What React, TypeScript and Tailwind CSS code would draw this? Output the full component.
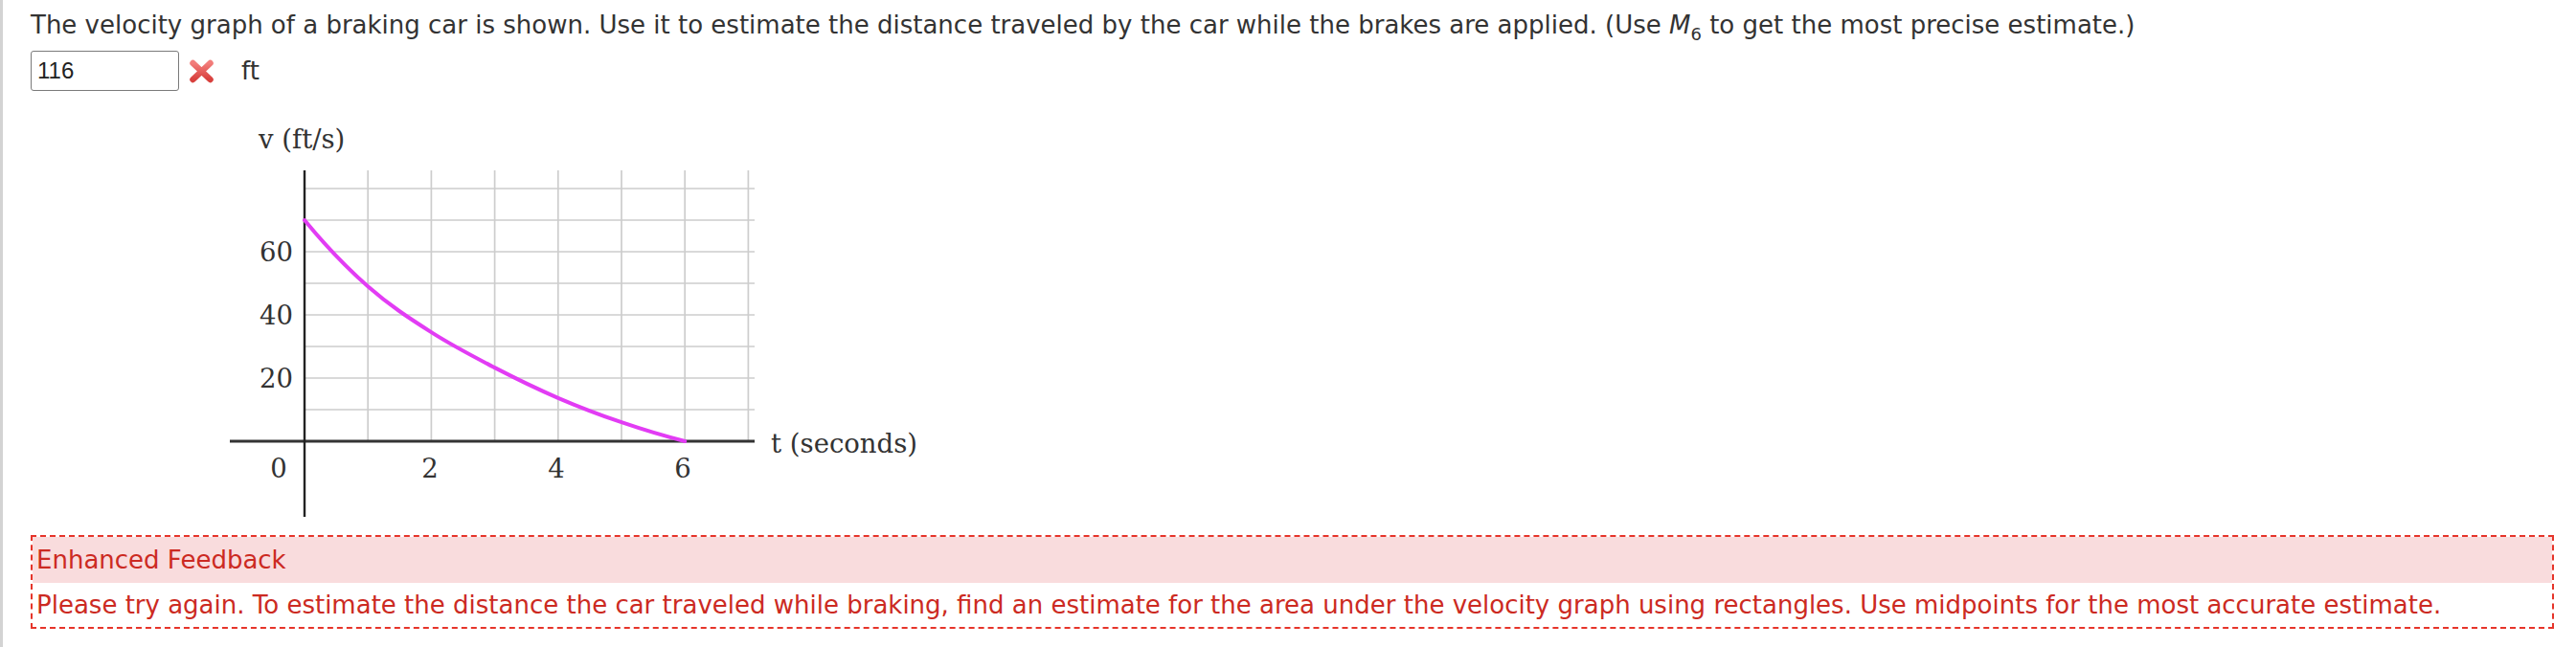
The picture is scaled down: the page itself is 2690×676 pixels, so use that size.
import React from "react";

// page coordinates of the plot
const X0 = 318;
const Y0 = 461;
const DX = 66.2; // px per second
const DY = 3.3; // px per ft/s

const px = (t: number) => X0 + t * DX;
const py = (v: number) => Y0 - v * DY;

// read off the picture, plus a phantom point at each end for the tangents
const samples: [number, number][] = [
  [-1, 98],
  [0, 70],
  [1, 49],
  [2, 34.5],
  [3, 23.3],
  [4, 13.7],
  [5, 6],
  [6, 0],
  [7, -4],
];

// catmull-rom through the samples
function curvePath() {
  const p = samples.map(([t, v]) => [px(t), py(v)]);
  let d = `M${p[1][0]},${p[1][1]}`;
  for (let i = 1; i < p.length - 2; i++) {
    const a = p[i - 1];
    const b = p[i];
    const c = p[i + 1];
    const e = p[i + 2];
    const c1x = b[0] + (c[0] - a[0]) / 6;
    const c1y = b[1] + (c[1] - a[1]) / 6;
    const c2x = c[0] - (e[0] - b[0]) / 6;
    const c2y = c[1] - (e[1] - b[1]) / 6;
    d += ` C${c1x},${c1y} ${c2x},${c2y} ${c[0]},${c[1]}`;
  }
  return d;
}

function Graph() {
  return (
    <svg
      width="760"
      height="435"
      viewBox="230 110 760 435"
      className="block ml-[198px] mt-[15px] font-['DejaVu_Serif',serif] fill-[#333]"
    >
      {/* grid */}
      {[10, 20, 30, 40, 50, 60, 70, 80].map((v) => (
        <line key={"h" + v} x1={X0} x2={788} y1={py(v)} y2={py(v)} stroke="#cdcdcd" strokeWidth="1.7" />
      ))}
      {[1, 2, 3, 4, 5, 6, 7].map((t) => (
        <line key={"v" + t} x1={px(t)} x2={px(t)} y1={178} y2={Y0} stroke="#cdcdcd" strokeWidth="1.7" />
      ))}

      {/* axes */}
      <line x1={240} x2={788} y1={Y0} y2={Y0} stroke="#333" strokeWidth="2.8" />
      <line x1={X0} x2={X0} y1={178} y2={540} stroke="#222" strokeWidth="2.4" />

      <path d={curvePath()} fill="none" stroke="#e23cf4" strokeWidth="4" strokeLinecap="round" />

      {/* labels */}
      <text x={270} y={155} fontSize="27.5">v (ft/s)</text>
      <text x={805} y={473} fontSize="27.5">t (seconds)</text>
      {[60, 40, 20].map((v) => (
        <text key={v} x={306} y={py(v) + 10} fontSize="27.5" textAnchor="end">
          {v}
        </text>
      ))}
      <text x={291} y={499} fontSize="27.5" textAnchor="middle">0</text>
      <text x={449} y={499} fontSize="27.5" textAnchor="middle">2</text>
      <text x={581} y={499} fontSize="27.5" textAnchor="middle">4</text>
      <text x={713} y={499} fontSize="27.5" textAnchor="middle">6</text>
    </svg>
  );
}

function WrongMark() {
  return (
    <svg width="27" height="25" viewBox="0 0 27 25" className="block">
      <defs>
        <linearGradient id="xg" x1="0" y1="0" x2="0" y2="1">
          <stop offset="0" stopColor="#f27d7b" />
          <stop offset="1" stopColor="#d8403d" />
        </linearGradient>
      </defs>
      <path d="M4.5 4 L22.5 21 M22.5 4 L4.5 21" stroke="url(#xg)" strokeWidth="6.5" strokeLinecap="round" />
    </svg>
  );
}

export default function App() {
  return (
    <div className="h-[676px] bg-white border-l-[3px] border-[#d3d3d3] pl-[29px] pr-[23px] text-[#333] text-[26px] font-['DejaVu_Sans',Verdana,sans-serif]">
      <p className="pt-[11px] leading-[30px] whitespace-nowrap">
        The velocity graph of a braking car is shown. Use it to estimate the distance traveled by the car while the
        brakes are applied. (Use <span className="italic">M</span>
        <span className="text-[18px] leading-none relative top-[7px]">6</span> to get the most precise estimate.)
      </p>

      <div className="mt-[12px] flex items-center h-[42px]">
        <input
          readOnly
          value="116"
          className="w-[155px] h-[42px] border border-[#7a7a7a] rounded-[3px] pl-[6px] text-[24px] text-[#222] bg-white outline-none font-['Liberation_Sans',Arial,sans-serif]"
        />
        <div className="ml-[10px]">
          <WrongMark />
        </div>
        <span className="ml-[28px] leading-[30px]">ft</span>
      </div>

      <Graph />

      <div className="mt-[14px] border-2 border-dashed border-[#e6352a] text-[#cc2a22]">
        <div className="h-[48px] leading-[48px] bg-[#f9dcdd] pl-[4px]">Enhanced Feedback</div>
        <div className="h-[46px] leading-[46px] pl-[4px] whitespace-nowrap">
          Please try again. To estimate the distance the car traveled while braking, find an estimate for the area
          under the velocity graph using rectangles. Use midpoints for the most accurate estimate.
        </div>
      </div>
    </div>
  );
}
